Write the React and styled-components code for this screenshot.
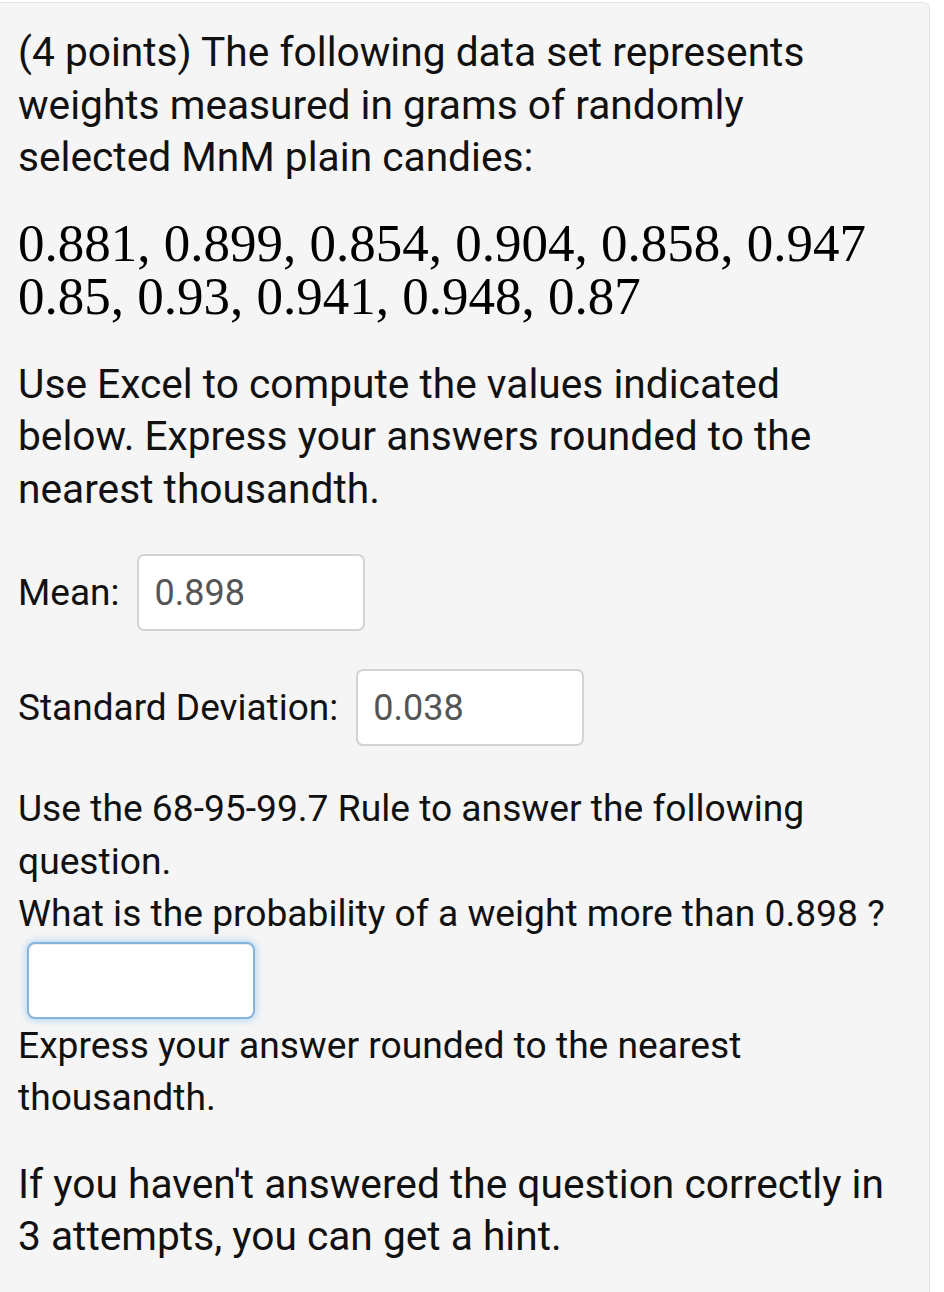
import styled, { createGlobalStyle } from 'styled-components'

const GlobalStyle = createGlobalStyle`
  html, body {
    margin: 0;
    padding: 0;
    background: #fff;
  }
  body {
    font-family: Roboto, "Noto Sans", sans-serif;
    color: #111;
  }
`

const Panel = styled.div`
  box-sizing: border-box;
  margin-top: 2px;
  width: 930px;
  min-height: 1290px;
  padding: 23px 36px 40px 18px;
  background: #f5f5f5;
  border-top: 1px solid #e3e3e3;
  border-right: 1px solid #e3e3e3;
  border-top-right-radius: 6px;
`

const Para = styled.p`
  margin: ${p => p.$top || 0}px 0 0;
  font-size: ${p => (p.$small ? 37.2 : 40.7)}px;
  line-height: 52.5px;
`

const MathBlock = styled.div`
  margin-top: 33px;
  font-family: "Liberation Serif", "Times New Roman", serif;
  font-size: 53px;
  line-height: 53px;
  color: #000;
`

const Field = styled.div`
  display: flex;
  align-items: center;
  gap: 18px;
  margin-top: ${p => p.$top}px;
`

const Label = styled.span`
  font-size: 37px;
`

const Box = styled.div`
  box-sizing: border-box;
  display: flex;
  align-items: center;
  width: 228px;
  height: 77px;
  padding: 0 15px;
  background: #fff;
  border: 2px solid #d3d3d3;
  border-radius: 7px;
  font-size: 36px;
  color: #555;
`

const AnswerBox = styled.div`
  box-sizing: border-box;
  width: 228px;
  height: 77px;
  margin: 2px 0 0 9px;
  background: #fff;
  border: 2px solid #86b4da;
  border-radius: 8px;
  box-shadow: inset 0 1px 1px rgba(0, 0, 0, 0.075), 0 0 9px rgba(82, 168, 236, 0.55);
`

export default function App() {
  return (
    <>
      <GlobalStyle />
      <Panel>
        <Para>
          (4 points) The following data set represents weights measured in grams of randomly
          selected MnM plain candies:
        </Para>
        <MathBlock>
          0.881, 0.899, 0.854, 0.904, 0.858, 0.947
          <br />
          0.85, 0.93, 0.941, 0.948, 0.87
        </MathBlock>
        <Para $top={35}>
          Use Excel to compute the values indicated below. Express your answers rounded to the
          nearest thousandth.
        </Para>
        <Field $top={39}>
          <Label>Mean:</Label>
          <Box>0.898</Box>
        </Field>
        <Field $top={38}>
          <Label>Standard Deviation:</Label>
          <Box>0.038</Box>
        </Field>
        <Para $top={36} $small>
          Use the 68-95-99.7 Rule to answer the following question.
          <br />
          What is the probability of a weight more than 0.898 ?
        </Para>
        <AnswerBox />
        <Para $small>Express your answer rounded to the nearest thousandth.</Para>
        <Para $top={34}>
          If you haven't answered the question correctly in 3 attempts, you can get a hint.
        </Para>
      </Panel>
    </>
  )
}
